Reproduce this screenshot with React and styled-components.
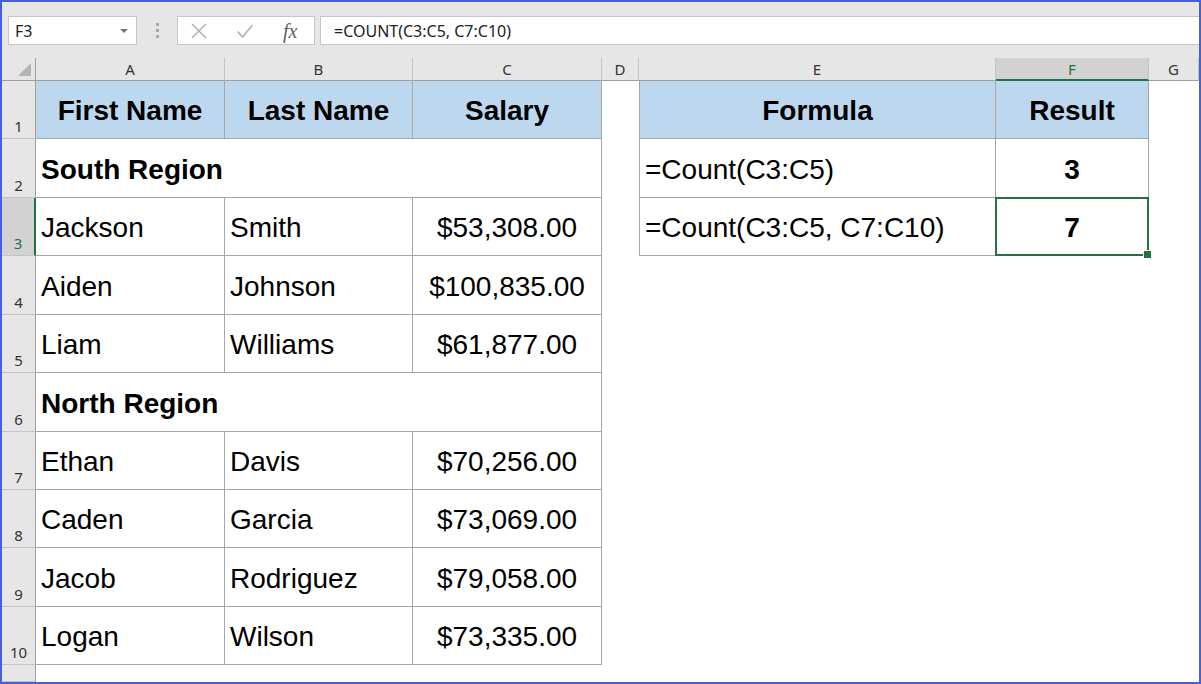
import React from 'react';
import styled, { createGlobalStyle, css } from 'styled-components';

const GlobalStyle = createGlobalStyle`
  html, body {
    margin: 0;
    padding: 0;
    background: #ffffff;
  }
  * {
    box-sizing: border-box;
  }
`;

const GREEN = '#217346';
const TABLE_LINE = '#a6a6a6';

const columns = [
  { key: 'A', width: 189 },
  { key: 'B', width: 188 },
  { key: 'C', width: 189 },
  { key: 'D', width: 37 },
  { key: 'E', width: 357 },
  { key: 'F', width: 153 },
  { key: 'G', width: 0 },
];

const rowHeights = [58, 59, 58, 59, 58, 59, 58, 58, 59, 58];

const people = {
  3: ['Jackson', 'Smith', '$53,308.00'],
  4: ['Aiden', 'Johnson', '$100,835.00'],
  5: ['Liam', 'Williams', '$61,877.00'],
  7: ['Ethan', 'Davis', '$70,256.00'],
  8: ['Caden', 'Garcia', '$73,069.00'],
  9: ['Jacob', 'Rodriguez', '$79,058.00'],
  10: ['Logan', 'Wilson', '$73,335.00'],
};

const regions = {
  2: 'South Region',
  6: 'North Region',
};

const formulas = {
  2: ['=Count(C3:C5)', '3'],
  3: ['=Count(C3:C5, C7:C10)', '7'],
};

const Frame = styled.div`
  width: 1201px;
  height: 684px;
  border: 2px solid #4a5fd6;
  background: #ffffff;
  display: flex;
  flex-direction: column;
  overflow: hidden;
  font-family: "Liberation Sans", Arial, sans-serif;
`;

const Toolbar = styled.div`
  height: 56px;
  flex-shrink: 0;
  background: #e6e6e6;
  display: flex;
  align-items: flex-start;
  padding: 14px 0 0 6px;
  font-family: "Noto Sans", "Open Sans", sans-serif;
  font-size: 16px;
  color: #222;
`;

const NameBox = styled.div`
  width: 129px;
  height: 29px;
  background: #fff;
  border: 1px solid #c6c6c6;
  display: flex;
  align-items: center;
  justify-content: space-between;
  padding: 0 8px 0 6px;
`;

const DropArrow = styled.span`
  width: 0;
  height: 0;
  border-left: 4px solid transparent;
  border-right: 4px solid transparent;
  border-top: 4px solid #777;
`;

const Grip = styled.div`
  width: 40px;
  height: 29px;
  display: flex;
  flex-direction: column;
  align-items: center;
  justify-content: center;
  gap: 3px;
  span {
    width: 3px;
    height: 3px;
    background: #a9a9a9;
  }
`;

const FxBox = styled.div`
  width: 138px;
  height: 29px;
  background: #fff;
  border: 1px solid #c6c6c6;
  display: flex;
  align-items: center;
  padding-left: 12px;
  gap: 28px;
`;

const FxGlyph = styled.span`
  font-family: "Liberation Serif", "Times New Roman", serif;
  font-style: italic;
  font-size: 20px;
  color: #5f5f5f;
  line-height: 1;
  margin-left: 1px;
`;

const FormulaBar = styled.div`
  flex: 1;
  height: 29px;
  margin-left: 5px;
  background: #fff;
  border: 1px solid #c6c6c6;
  border-right: none;
  display: flex;
  align-items: center;
  padding-left: 13px;
`;

const Sheet = styled.div`
  flex: 1;
  display: grid;
  grid-template-columns: 34px ${columns.map((c) => (c.width ? `${c.width}px` : '1fr')).join(' ')};
  grid-template-rows: 23px ${rowHeights.map((h) => `${h}px`).join(' ')} 1fr;
`;

const Corner = styled.div`
  background: #e6e6e6;
  border-right: 1px solid #9e9e9e;
  border-bottom: 1px solid #9e9e9e;
  position: relative;
  &::after {
    content: '';
    position: absolute;
    right: 4px;
    bottom: 4px;
    width: 0;
    height: 0;
    border-left: 13px solid transparent;
    border-bottom: 13px solid #b4b4b4;
  }
`;

const ColHead = styled.div`
  background: ${(p) => (p.$active ? '#d2d2d2' : '#e6e6e6')};
  border-right: 1px solid #c4c4c4;
  border-bottom: ${(p) => (p.$active ? `2px solid ${GREEN}` : '1px solid #9e9e9e')};
  color: ${(p) => (p.$active ? GREEN : '#333')};
  font-family: "Noto Sans", "Open Sans", sans-serif;
  font-size: 15px;
  display: flex;
  align-items: center;
  justify-content: center;
  padding-top: ${(p) => (p.$active ? '1px' : '0')};
`;

const RowHead = styled.div`
  background: ${(p) => (p.$active ? '#d2d2d2' : '#e6e6e6')};
  border-right: ${(p) => (p.$active ? `2px solid ${GREEN}` : '1px solid #9e9e9e')};
  border-bottom: 1px solid #c4c4c4;
  color: ${(p) => (p.$active ? GREEN : '#333')};
  font-family: "Noto Sans", "Open Sans", sans-serif;
  font-size: 15px;
  display: flex;
  align-items: flex-end;
  justify-content: center;
  padding-bottom: 2px;
`;

const Cell = styled.div`
  position: relative;
  display: flex;
  align-items: center;
  padding: 3px 5px 0;
  font-size: 28px;
  color: #000;
  white-space: nowrap;
  background: ${(p) => (p.$fill ? '#bdd7ee' : '#fff')};
  font-weight: ${(p) => (p.$bold ? 700 : 400)};
  justify-content: ${(p) => (p.$center ? 'center' : 'flex-start')};
  grid-column: ${(p) => (p.$span ? `span ${p.$span}` : 'auto')};
  ${(p) =>
    p.$boxed &&
    css`
      border-right: 1px solid ${TABLE_LINE};
      border-bottom: 1px solid ${TABLE_LINE};
    `}
  ${(p) =>
    p.$leftEdge &&
    css`
      border-left: 1px solid ${TABLE_LINE};
    `}
  ${(p) =>
    p.$selected &&
    css`
      &::after {
        content: '';
        position: absolute;
        top: -1px;
        left: -1px;
        right: -1px;
        bottom: -1px;
        border: 2px solid ${GREEN};
        pointer-events: none;
      }
      &::before {
        content: '';
        position: absolute;
        right: -4px;
        bottom: -4px;
        width: 7px;
        height: 7px;
        background: ${GREEN};
        border: 1px solid #fff;
        z-index: 1;
      }
    `}
`;

const CancelIcon = () => (
  <svg width="18" height="18" viewBox="0 0 18 18">
    <path d="M2 2 L16 16 M16 2 L2 16" stroke="#b3b3b3" strokeWidth="1.6" fill="none" />
  </svg>
);

const CheckIcon = () => (
  <svg width="18" height="18" viewBox="0 0 18 18">
    <path d="M1.5 9.5 L6.5 15 L16.5 3" stroke="#b3b3b3" strokeWidth="1.8" fill="none" />
  </svg>
);

const renderRow = (r) => {
  const out = [
    <RowHead key={`h${r}`} $active={r === 3}>
      {r}
    </RowHead>,
  ];

  if (r === 1) {
    out.push(
      <Cell key="A1" $fill $bold $center $boxed>First Name</Cell>,
      <Cell key="B1" $fill $bold $center $boxed>Last Name</Cell>,
      <Cell key="C1" $fill $bold $center $boxed>Salary</Cell>
    );
  } else if (regions[r]) {
    out.push(
      <Cell key={`A${r}`} $bold $span={3} $boxed>
        {regions[r]}
      </Cell>
    );
  } else if (people[r]) {
    const [first, last, salary] = people[r];
    out.push(
      <Cell key={`A${r}`} $boxed>{first}</Cell>,
      <Cell key={`B${r}`} $boxed>{last}</Cell>,
      <Cell key={`C${r}`} $center $boxed>{salary}</Cell>
    );
  }

  out.push(<Cell key={`D${r}`} />);

  if (r === 1) {
    out.push(
      <Cell key="E1" $fill $bold $center $boxed $leftEdge>Formula</Cell>,
      <Cell key="F1" $fill $bold $center $boxed>Result</Cell>
    );
  } else if (formulas[r]) {
    const [formula, result] = formulas[r];
    out.push(
      <Cell key={`E${r}`} $boxed $leftEdge>{formula}</Cell>,
      <Cell key={`F${r}`} $bold $center $boxed $selected={r === 3}>
        {result}
      </Cell>
    );
  } else {
    out.push(<Cell key={`E${r}`} />, <Cell key={`F${r}`} />);
  }

  out.push(<Cell key={`G${r}`} />);
  return out;
};

const App = () => {
  const rows = rowHeights.map((_, i) => i + 1);

  return (
    <>
      <GlobalStyle />
      <Frame>
        <Toolbar>
          <NameBox>
            F3
            <DropArrow />
          </NameBox>
          <Grip>
            <span />
            <span />
            <span />
          </Grip>
          <FxBox>
            <CancelIcon />
            <CheckIcon />
            <FxGlyph>fx</FxGlyph>
          </FxBox>
          <FormulaBar>=COUNT(C3:C5, C7:C10)</FormulaBar>
        </Toolbar>
        <Sheet>
          <Corner />
          {columns.map((c) => (
            <ColHead key={c.key} $active={c.key === 'F'}>
              {c.key}
            </ColHead>
          ))}
          {rows.map(renderRow)}
          <RowHead />
          {columns.map((c) => (
            <Cell key={`${c.key}11`} />
          ))}
        </Sheet>
      </Frame>
    </>
  );
};

export default App;
